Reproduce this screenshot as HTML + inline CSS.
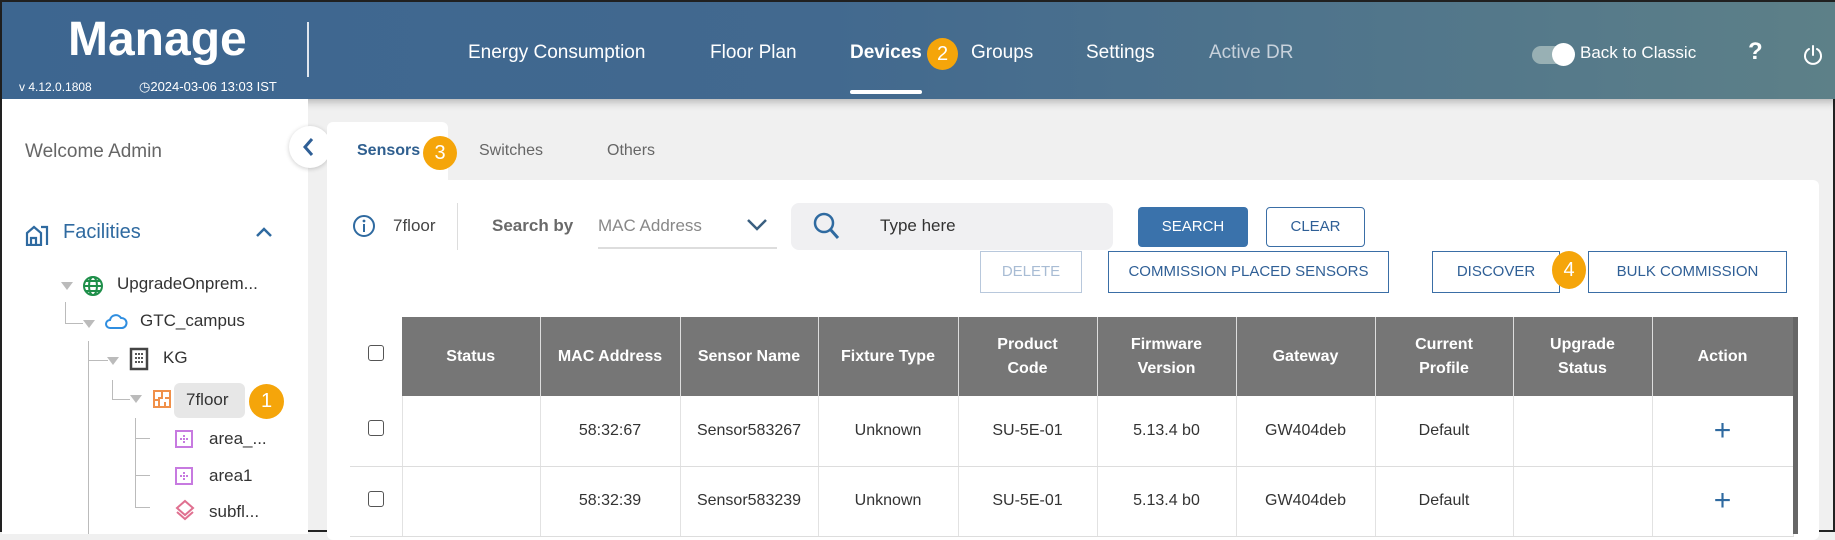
<!DOCTYPE html>
<html><head><meta charset="utf-8"><style>
*{box-sizing:border-box;margin:0;padding:0}
body{width:1835px;height:532px;overflow:hidden;font-family:"Liberation Sans",sans-serif;background:#f0f0f0;position:relative;border:2px solid #222}
.a{position:absolute;white-space:nowrap}
.hdr{left:0;top:0;width:1835px;height:97px;background:linear-gradient(90deg,#3d6690 0%,#42698f 45%,#5d8088 100%);box-shadow:0 3px 8px rgba(0,0,0,.25)}
.nav{color:#fff;font-size:19px;top:40px}
.badge{position:absolute;border-radius:50%;background:#f5a50a;color:#fff;text-align:center;font-size:20px}
.side{left:0;top:97px;width:306px;height:435px;background:#fff}
.tr{font-size:17px;color:#333}
.tri{position:absolute;width:0;height:0;border-left:6px solid transparent;border-right:6px solid transparent;border-top:8px solid #bbb}
.btn{position:absolute;top:249px;height:42px;border:1.5px solid #3a6ea6;color:#2f5f96;font-size:15px;text-align:center;line-height:39px;background:#fff}
table{position:absolute;left:348px;top:315px;border-collapse:collapse;font-size:16px}
th{background:#767676;color:#fff;font-weight:bold;height:79px;border-right:1px solid #ddd;text-align:center;line-height:24px}
td{height:70px;text-align:center;color:#333;border-right:1px solid #e2e2e2;border-bottom:1px solid #ddd;background:#fff}
.cb{display:inline-block;width:16px;height:16px;border:1.5px solid #555;border-radius:3px}
</style></head><body>
<div class="a hdr"></div>
<div class="a" style="left:66px;top:10px;color:#fff;font-size:48px;font-weight:bold">Manage</div>
<div class="a" style="left:17px;top:78px;color:#fff;font-size:12px">v 4.12.0.1808</div>
<div class="a" style="left:137px;top:77px;color:#fff;font-size:13px">&#9719;2024-03-06 13:03 IST</div>
<div class="a" style="left:305px;top:20px;width:1.5px;height:55px;background:#dfe6ee"></div>
<div class="a nav" style="left:466px">Energy Consumption</div>
<div class="a nav" style="left:708px">Floor Plan</div>
<div class="a nav" style="left:848px;font-weight:bold">Devices</div>
<div class="badge" style="left:925px;top:36px;width:31px;height:32px;line-height:32px">2</div>
<div class="a nav" style="left:969px">Groups</div>
<div class="a nav" style="left:1084px">Settings</div>
<div class="a nav" style="left:1207px;color:#c8d2dc">Active DR</div>
<div class="a" style="left:848px;top:88px;width:72px;height:4px;background:#fff;border-radius:2px"></div>
<div class="a" style="left:1530px;top:44px;width:38px;height:18px;border-radius:9px;background:#98b0b4"></div>
<div class="a" style="left:1550px;top:41px;width:23px;height:23px;border-radius:50%;background:#fff"></div>
<div class="a" style="left:1578px;top:41px;color:#fff;font-size:17px">Back to Classic</div>
<div class="a" style="left:1746px;top:36px;color:#fff;font-size:24px;font-weight:bold">?</div>
<svg class="a" style="left:1800px;top:42px" width="22" height="22" viewBox="0 0 22 22"><path d="M7 5A8 8 0 1 0 15 5M11 2V11" stroke="#fff" stroke-width="2" fill="none" stroke-linecap="round"/></svg>

<div class="a side"></div>
<div class="a" style="left:23px;top:139px;font-size:19px;color:#666">Welcome Admin</div>
<div class="a" style="left:287px;top:124px;width:42px;height:42px;border-radius:50%;background:#fff;box-shadow:0 1px 5px rgba(0,0,0,.2)"></div>
<svg class="a" style="left:300px;top:134px" width="14" height="22"><path d="M10 3L3 11l7 8" stroke="#2f5f96" stroke-width="3" fill="none"/></svg>
<svg class="a" style="left:23px;top:222px" width="24" height="22" viewBox="0 0 24 22"><path d="M2 21V9l7-6 7 6v12zM6 21v-7h5v7M16 3h6v18" stroke="#2f6aa0" stroke-width="2.2" fill="none"/></svg>
<div class="a" style="left:61px;top:219px;font-size:20px;color:#2f6aa0">Facilities</div>
<svg class="a" style="left:253px;top:224px" width="18" height="12"><path d="M2 10l7-7 7 7" stroke="#2f6aa0" stroke-width="2.5" fill="none"/></svg>
<div class="a" style="left:63px;top:300px;width:1px;height:22px;background:#bbb"></div><div class="a" style="left:63px;top:321px;width:18px;height:1px;background:#bbb"></div>
<div class="a" style="left:86px;top:339px;width:1px;height:193px;background:#bbb"></div><div class="a" style="left:86px;top:358px;width:20px;height:1px;background:#bbb"></div>
<div class="a" style="left:110px;top:378px;width:1px;height:20px;background:#bbb"></div><div class="a" style="left:110px;top:397px;width:18px;height:1px;background:#bbb"></div>
<div class="a" style="left:133px;top:416px;width:1px;height:90px;background:#bbb"></div>
<div class="a" style="left:133px;top:436px;width:15px;height:1px;background:#bbb"></div><div class="a" style="left:133px;top:473px;width:15px;height:1px;background:#bbb"></div><div class="a" style="left:133px;top:505px;width:15px;height:1px;background:#bbb"></div>
<div class="tri" style="left:59px;top:280px"></div>
<div class="tri" style="left:81px;top:318px"></div>
<div class="tri" style="left:105px;top:355px"></div>
<div class="tri" style="left:128px;top:393px"></div>
<svg class="a" style="left:80px;top:273px" width="22" height="22" viewBox="0 0 22 22"><g stroke="#1f8f4a" stroke-width="2" fill="none"><circle cx="11" cy="11" r="9"/><ellipse cx="11" cy="11" rx="4" ry="9"/><path d="M2 11h18M4 6h14M4 16h14"/></g></svg>
<div class="a tr" style="left:115px;top:272px">UpgradeOnprem...</div>
<svg class="a" style="left:102px;top:309px" width="24" height="20" viewBox="0 0 24 20"><path d="M6 17a4 4 0 0 1 0-8 6 6 0 0 1 11-2 5 5 0 0 1 1 10z" stroke="#2f8ee0" stroke-width="2" fill="none"/></svg>
<div class="a tr" style="left:138px;top:309px">GTC_campus</div>
<svg class="a" style="left:127px;top:345px" width="20" height="24" viewBox="0 0 20 24"><rect x="2" y="2" width="16" height="20" fill="none" stroke="#444" stroke-width="2.5"/><g fill="#555"><rect x="6" y="6" width="2" height="2"/><rect x="9" y="6" width="2" height="2"/><rect x="12" y="6" width="2" height="2"/><rect x="6" y="10" width="2" height="2"/><rect x="9" y="10" width="2" height="2"/><rect x="12" y="10" width="2" height="2"/><rect x="6" y="14" width="2" height="2"/><rect x="9" y="14" width="2" height="2"/><rect x="12" y="14" width="2" height="2"/></g></svg>
<div class="a tr" style="left:161px;top:346px">KG</div>
<svg class="a" style="left:150px;top:387px" width="20" height="20" viewBox="0 0 20 20"><path d="M2 2h16v16H2zM10 2v7H6M2 11h5v7M13 9h5M13 13v5" stroke="#f0904a" stroke-width="2" fill="none"/></svg>
<div class="a" style="left:172px;top:381px;width:71px;height:35px;border-radius:6px;background:#e7e7e7"></div>
<div class="a tr" style="left:184px;top:388px">7floor</div>
<div class="badge" style="left:247px;top:382px;width:35px;height:35px;line-height:35px">1</div>
<svg class="a" style="left:172px;top:427px" width="20" height="20"><rect x="2" y="2" width="16" height="16" fill="none" stroke="#c77ae0" stroke-width="2"/><g fill="#c77ae0"><rect x="9" y="6" width="2" height="2"/><rect x="6" y="9" width="2" height="2"/><rect x="9" y="9" width="2" height="2"/><rect x="12" y="9" width="2" height="2"/><rect x="9" y="12" width="2" height="2"/></g></svg>
<div class="a tr" style="left:207px;top:427px">area_...</div>
<svg class="a" style="left:172px;top:464px" width="20" height="20"><rect x="2" y="2" width="16" height="16" fill="none" stroke="#c77ae0" stroke-width="2"/><g fill="#c77ae0"><rect x="9" y="6" width="2" height="2"/><rect x="6" y="9" width="2" height="2"/><rect x="9" y="9" width="2" height="2"/><rect x="12" y="9" width="2" height="2"/><rect x="9" y="12" width="2" height="2"/></g></svg>
<div class="a tr" style="left:207px;top:464px">area1</div>
<svg class="a" style="left:172px;top:497px" width="22" height="22"><path d="M11 2l8 7-8 7-8-7zM3 13l8 7 8-7" stroke="#e07090" stroke-width="2" fill="none"/></svg>
<div class="a tr" style="left:207px;top:500px">subfl...</div>

<div class="a" style="left:325px;top:178px;width:1492px;height:360px;background:#fff;border-radius:6px"></div>
<div class="a" style="left:325px;top:120px;width:121px;height:70px;background:#fff;border-radius:6px 6px 0 0"></div>
<div class="a" style="left:355px;top:140px;font-size:16px;color:#2f5f8f;font-weight:bold">Sensors</div>
<div class="badge" style="left:421px;top:134px;width:34px;height:34px;line-height:34px">3</div>
<div class="a" style="left:477px;top:140px;font-size:16px;color:#666">Switches</div>
<div class="a" style="left:605px;top:140px;font-size:16px;color:#666">Others</div>
<svg class="a" style="left:350px;top:212px" width="24" height="24"><circle cx="12" cy="12" r="10" fill="none" stroke="#2f6aa0" stroke-width="2"/><path d="M12 10v8" stroke="#2f6aa0" stroke-width="2"/><circle cx="12" cy="7" r="1.4" fill="#2f6aa0"/></svg>
<div class="a" style="left:391px;top:214px;font-size:17px;color:#444">7floor</div>
<div class="a" style="left:455px;top:201px;width:1px;height:47px;background:#ddd"></div>
<div class="a" style="left:490px;top:214px;font-size:17px;color:#444;font-weight:bold;opacity:.8">Search by</div>
<div class="a" style="left:596px;top:214px;font-size:17px;color:#888">MAC Address</div>
<svg class="a" style="left:744px;top:216px" width="22" height="14"><path d="M2 2l9 9 9-9" stroke="#3a5f80" stroke-width="2.5" fill="none"/></svg>
<div class="a" style="left:596px;top:245px;width:179px;height:1.5px;background:#ddd"></div>
<div class="a" style="left:789px;top:201px;width:322px;height:47px;border-radius:8px;background:#f0f0f2"></div>
<svg class="a" style="left:810px;top:209px" width="30" height="30"><circle cx="12" cy="12" r="9" fill="none" stroke="#2f6aa0" stroke-width="2.5"/><path d="M18 18l8 9" stroke="#2f6aa0" stroke-width="3"/></svg>
<div class="a" style="left:878px;top:214px;font-size:17px;color:#333">Type here</div>
<div class="a" style="left:1136px;top:205px;width:110px;height:40px;border-radius:4px;background:#3a72ab;color:#fff;font-size:15px;text-align:center;line-height:40px">SEARCH</div>
<div class="a" style="left:1264px;top:205px;width:99px;height:40px;border-radius:4px;border:1.5px solid #3a6ea6;color:#2f5f96;font-size:15px;text-align:center;line-height:37px">CLEAR</div>
<div class="btn" style="left:978px;width:102px;border-color:#b8c8dc;color:#a8bcd4">DELETE</div>
<div class="btn" style="left:1106px;width:281px">COMMISSION PLACED SENSORS</div>
<div class="btn" style="left:1430px;width:128px">DISCOVER</div>
<div class="badge" style="left:1550px;top:249px;width:34px;height:38px;line-height:38px">4</div>
<div class="btn" style="left:1586px;width:199px">BULK COMMISSION</div>

<table>
<tr><th style="width:52px;background:#fff;border-right:none"><span class="cb"></span></th><th style="width:138px">Status</th><th style="width:140px">MAC Address</th><th style="width:138px">Sensor Name</th><th style="width:140px">Fixture Type</th><th style="width:139px">Product<br>Code</th><th style="width:139px">Firmware<br>Version</th><th style="width:139px">Gateway</th><th style="width:138px">Current<br>Profile</th><th style="width:139px">Upgrade<br>Status</th><th style="width:141px">Action</th></tr>
<tr><td><span class="cb"></span></td><td></td><td>58:32:67</td><td>Sensor583267</td><td>Unknown</td><td>SU-5E-01</td><td>5.13.4 b0</td><td>GW404deb</td><td>Default</td><td></td><td style="color:#2f6aa0;font-size:30px">+</td></tr>
<tr><td><span class="cb"></span></td><td></td><td>58:32:39</td><td>Sensor583239</td><td>Unknown</td><td>SU-5E-01</td><td>5.13.4 b0</td><td>GW404deb</td><td>Default</td><td></td><td style="color:#2f6aa0;font-size:30px">+</td></tr>
</table>
<div class="a" style="left:1791px;top:315px;width:5px;height:217px;background:#666"></div>
</body></html>
